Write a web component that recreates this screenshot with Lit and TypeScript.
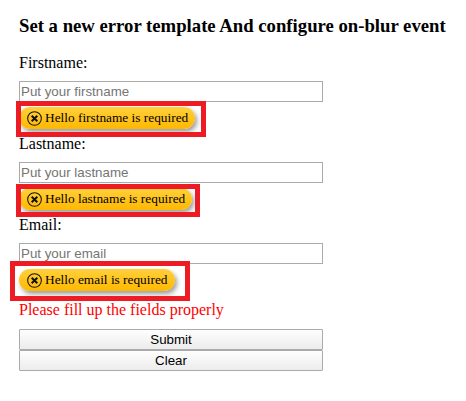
import { LitElement, html, css } from "lit";
import { customElement } from "lit/decorators.js";

const icon = html`<svg class="ico" viewBox="0 0 16 16" width="15" height="15" aria-hidden="true">
  <circle cx="8" cy="8" r="7.3" fill="none" stroke="#111" stroke-width="1.1"></circle>
  <path d="M5 5 11 11M11 5 5 11" fill="none" stroke="#111" stroke-width="2.1"></path>
</svg>`;

@customElement("app-root")
export class AppRoot extends LitElement {
  static styles = css`
    :host { display: block; font-family: "Liberation Serif", serif; font-size: 16px; color: #000; }
    .page { padding: 15px 0 0 19px; width: 304px; }
    h3 { margin: 0 0 18px; font-size: 18.72px; line-height: 21px; font-weight: bold; white-space: nowrap; }
    .label { height: 27px; line-height: 18px; }
    .field { display: block; box-sizing: border-box; width: 304px; height: 21px; margin: 0; padding: 1px; border: 1px solid #aaa; background: #fff; font-family: "Liberation Sans", sans-serif; font-size: 13.33px; outline: none; }
    .field::placeholder { color: #757575; opacity: 1; }
    .err { position: relative; height: 33px; display: flex; align-items: flex-start; padding-top: 5px; box-sizing: border-box; }
    .e3 { height: 37px; }
    .pill { display: inline-flex; align-items: center; gap: 3px; height: 22px; box-sizing: border-box; padding: 0 7px 0 8px; border-radius: 11px; background: linear-gradient(#ffd03c, #ffb800); box-shadow: 2px 3px 5px rgba(0,0,0,.4); font-size: 13.33px; white-space: nowrap; }
    .ico { flex: none; }
    .mark { position: absolute; border: 5px solid #ed1c24; box-sizing: border-box; pointer-events: none; }
    .m1 { left: -3px; top: -1px; width: 190px; height: 36px; }
    .m2 { left: -3px; top: 1px; width: 184px; height: 33px; }
    .m3 { left: -9px; top: -3px; width: 180px; height: 40px; }
    .msg { color: #ff0000; line-height: 18px; margin: 0 0 10px; }
    button { display: block; box-sizing: border-box; width: 304px; height: 21px; margin: 0; padding: 0; border: 1px solid #aaa; border-radius: 1px; background: linear-gradient(#fefefe, #ececec); font-family: "Liberation Sans", sans-serif; font-size: 13.33px; color: #000; }
  `;

  private row(label: string, ph: string, msg: string, cls: string) {
    return html`
      <div class="label">${label}:</div>
      <input class="field" placeholder=${ph} />
      <div class="err ${cls === "m3" ? "e3" : ""}">
        <span class="pill">${icon}<span>${msg}</span></span>
        <div class="mark ${cls}"></div>
      </div>`;
  }

  render() {
    return html`<div class="page">
      <h3>Set a new error template And configure on-blur event</h3>
      ${this.row("Firstname", "Put your firstname", "Hello firstname is required", "m1")}
      ${this.row("Lastname", "Put your lastname", "Hello lastname is required", "m2")}
      ${this.row("Email", "Put your email", "Hello email is required", "m3")}
      <div class="msg">Please fill up the fields properly</div>
      <button>Submit</button>
      <button>Clear</button>
    </div>`;
  }
}
